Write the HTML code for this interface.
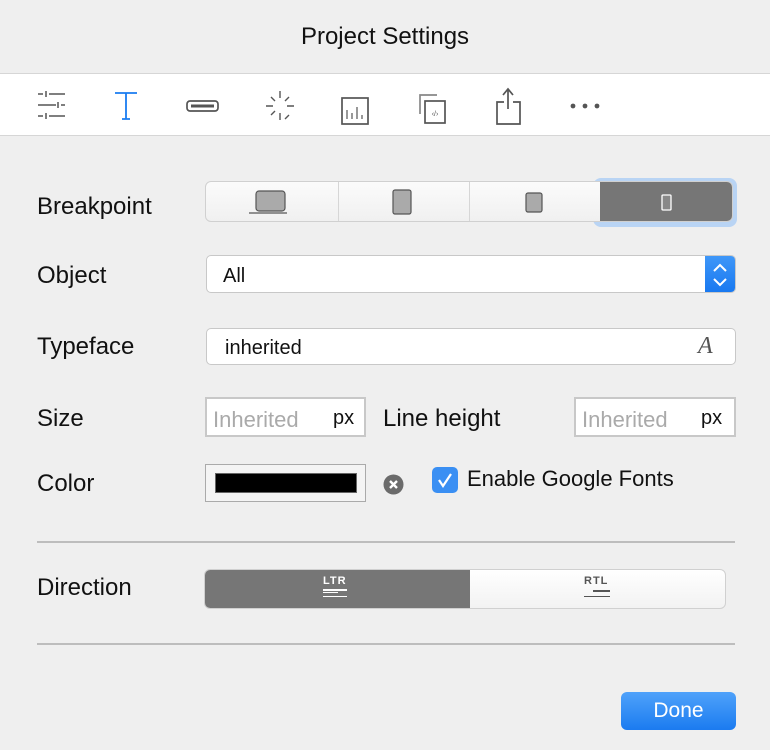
<html><head><style>
body{margin:0;width:770px;height:750px;background:#efefef;font-family:"Liberation Sans",sans-serif;position:relative;overflow:hidden;color:#111}
.a{position:absolute}
.lbl{position:absolute;left:37px;font-size:24px}
.inp{position:absolute;background:#fff;border:1px solid #c8c8c8;box-sizing:border-box}
</style></head><body>
<div class="a" style="left:0;width:770px;text-align:center;top:23px;font-size:24px">Project Settings</div>
<div class="a" style="left:0;top:73px;width:770px;height:63px;background:#fff;border-top:1px solid #d6d6d6;border-bottom:1px solid #d6d6d6;box-sizing:border-box"></div>
<svg class="a" style="left:0;top:74px" width="770" height="62" fill="none" stroke="#555" stroke-width="1.8">
<path d="M38 20h5M49 20h16M38 31h18M61 31h4M38 42h5M49 42h16M46 17v6M58 28v6M46 39v6" stroke-width="1.5"/>
<path d="M115 19h22M126 19v26M122 45h8" stroke="#1a7cf0" stroke-width="1.8"/>
<rect x="187" y="27" width="31" height="10" rx="3" stroke-width="1.7"/><path d="M191 32h23" stroke-width="3"/>
<path d="M280 17v7M280 39v7M266 32h7M287 32h7M271 23l4 4M289 23l-4 4M271 41l4-4M289 41l-4 4" stroke-width="1.4"/>
<rect x="342" y="24" width="26" height="26" stroke-width="1.7"/><path d="M347 45v-9M352 45v-6M357 45v-12M362 45v-4" stroke-width="1.2"/>
<path d="M420 40V21h17" stroke="#888" stroke-width="1.7"/><rect x="425" y="27" width="20" height="22" stroke-width="1.7"/><text x="435" y="42" font-size="7" text-anchor="middle" fill="#555" stroke="none">‹/›</text>
<path d="M508 15v20M503 21l5-6 5 6" stroke-width="1.7"/><path d="M504 28h-7v22h23V28h-7" stroke-width="1.7"/>
<circle cx="573" cy="32" r="2.4" fill="#555" stroke="none"/><circle cx="585" cy="32" r="2.4" fill="#555" stroke="none"/><circle cx="597" cy="32" r="2.4" fill="#555" stroke="none"/>
</svg>
<div class="lbl" style="top:193px">Breakpoint</div>
<div class="a" style="left:593px;top:178px;width:144px;height:49px;border-radius:8px;background:#b9d4f4"></div>
<div class="a" style="left:205px;top:181px;width:528px;height:41px;border:1px solid #d0d0d0;border-radius:6px;background:linear-gradient(#fbfbfb,#f0f0f0);box-sizing:border-box;overflow:hidden">
<div class="a" style="left:132px;top:0;width:1px;height:41px;background:#d6d6d6"></div>
<div class="a" style="left:263px;top:0;width:1px;height:41px;background:#d6d6d6"></div>
<div class="a" style="left:394px;top:-1px;width:134px;height:41px;background:#767676"></div>
</div>
<svg class="a" style="left:0;top:181px" width="770" height="41"><rect x="256" y="10" width="29" height="20" rx="3" fill="#aaa" stroke="#555" stroke-width="1.2"/><path d="M249 32h38" stroke="#555" stroke-width="1.2"/>
<rect x="393" y="9" width="18" height="24" rx="2" fill="#aaa" stroke="#555" stroke-width="1.2"/>
<rect x="526" y="12" width="16" height="19" rx="2" fill="#aaa" stroke="#555" stroke-width="1.2"/>
<rect x="662" y="14" width="9" height="15" rx="1" fill="#888" stroke="#fff" stroke-width="1.3"/></svg>
<div class="lbl" style="top:262px">Object</div>
<div class="inp" style="left:206px;top:255px;width:530px;height:38px;border-radius:5px;overflow:hidden"><span class="a" style="left:16px;top:9px;font-size:20px">All</span>
<div class="a" style="right:0;top:0;width:30px;height:38px;background:linear-gradient(#3f97f8,#1677f0)"></div>
<svg class="a" style="right:0;top:0" width="30" height="38"><path d="M9 15l6-6 6 6M9 23l6 6 6-6" stroke="#fff" stroke-width="2" fill="none"/></svg></div>
<div class="lbl" style="top:333px">Typeface</div>
<div class="inp" style="left:206px;top:328px;width:530px;height:37px;border-radius:5px"><span class="a" style="left:18px;top:8px;font-size:20px">inherited</span><span class="a" style="left:491px;top:4px;font-size:24px;font-style:italic;font-family:'Liberation Serif',serif;color:#555">A</span></div>
<div class="lbl" style="top:405px">Size</div>
<div class="inp" style="left:205px;top:397px;width:161px;height:40px;border:2px solid #c8c8c8"><span class="a" style="left:6px;top:8px;font-size:22px;color:#aaa">Inherited</span><span class="a" style="left:126px;top:8px;font-size:20px">px</span></div>
<div class="a" style="left:383px;top:405px;font-size:24px">Line height</div>
<div class="inp" style="left:574px;top:397px;width:162px;height:40px;border:2px solid #c8c8c8"><span class="a" style="left:6px;top:8px;font-size:22px;color:#aaa">Inherited</span><span class="a" style="left:125px;top:8px;font-size:20px">px</span></div>
<div class="lbl" style="top:470px">Color</div>
<div class="a" style="left:205px;top:464px;width:161px;height:38px;border:1px solid #aaa;background:#f4f4f4;box-sizing:border-box"><div class="a" style="left:9px;top:8px;width:142px;height:20px;background:#000;border:1px solid #666;box-sizing:border-box"></div></div>
<svg class="a" style="left:383px;top:474px" width="21" height="21"><circle cx="10.5" cy="10.5" r="10" fill="#6b6b6b"/><path d="M7 7l7 7M14 7l-7 7" stroke="#fff" stroke-width="2.4"/></svg>
<div class="a" style="left:432px;top:467px;width:26px;height:26px;border-radius:5px;background:#3a8ff3"></div>
<svg class="a" style="left:432px;top:467px" width="26" height="26"><path d="M7 13l4 6 8-12" stroke="#fff" stroke-width="2.2" fill="none"/></svg>
<div class="a" style="left:467px;top:466px;font-size:22px">Enable Google Fonts</div>
<div class="a" style="left:37px;top:541px;width:698px;height:2px;background:#bdbdbd"></div>
<div class="lbl" style="top:574px">Direction</div>
<div class="a" style="left:204px;top:569px;width:522px;height:40px;border:1px solid #d0d0d0;border-radius:6px;background:linear-gradient(#fff,#f2f2f2);box-sizing:border-box;overflow:hidden"><div class="a" style="left:0;top:0;width:265px;height:40px;background:#767676"></div></div>
<div class="a" style="left:323px;top:575px;font-size:11px;color:#fff;font-weight:bold;letter-spacing:1px">LTR</div>
<div class="a" style="left:323px;top:589px;width:24px;height:2px;background:#fff"></div><div class="a" style="left:323px;top:596px;width:24px;height:1px;background:#fff"></div><div class="a" style="left:323px;top:592px;width:15px;height:1px;background:#fff"></div>
<div class="a" style="left:584px;top:575px;font-size:11px;color:#555;font-weight:bold;letter-spacing:1px">RTL</div>
<div class="a" style="left:584px;top:596px;width:26px;height:1px;background:#555"></div><div class="a" style="left:593px;top:590px;width:17px;height:2px;background:#555"></div>
<div class="a" style="left:37px;top:643px;width:698px;height:2px;background:#bdbdbd"></div>
<div class="a" style="left:621px;top:692px;width:115px;height:38px;border-radius:6px;background:linear-gradient(#4fa2fa,#1b7bf0);color:#fff;font-size:21px;text-align:center;line-height:38px">Done</div>
</body></html>
